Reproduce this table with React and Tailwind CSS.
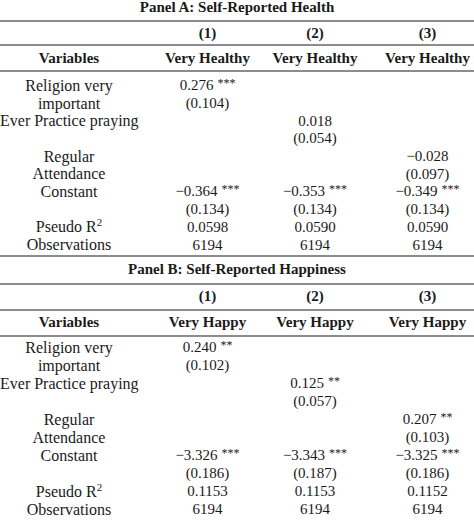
import React from "react";

const MINUS = "\u2212";

function Stars({ n }) {
  return (
    <span className="relative -top-[3px] ml-[4px] text-[12px]">{n}</span>
  );
}

function Val({ v, s }) {
  if (!v) return <div />;
  return (
    <div className="text-center whitespace-nowrap text-[15px]">
      {v}
      {s ? <Stars n={s} /> : null}
    </div>
  );
}

function Rule() {
  return <div className="h-[2px] w-full bg-[#8c8c8c]" />;
}

const GRID = "grid grid-cols-[154px_107px_108px_117px] items-center";

function Panel({ title, dep, rows, rowH, titleCls, headCls, varCls, padTop, bottomRule }) {
  return (
    <div className="flex flex-col">
      <div className={`${titleCls} flex items-center justify-center w-[474px] font-bold text-[15px]`}>
        {title}
      </div>
      <Rule />
      <div className={`${GRID} ${headCls} font-bold text-[15px]`}>
        <div />
        <div className="text-center">(1)</div>
        <div className="text-center">(2)</div>
        <div className="text-center">(3)</div>
      </div>
      <Rule />
      <div className={`${GRID} ${varCls} font-bold text-[15px]`}>
        <div className="text-center pr-[16px]">Variables</div>
        <div className="text-center whitespace-nowrap">{dep}</div>
        <div className="text-center whitespace-nowrap">{dep}</div>
        <div className="text-center whitespace-nowrap">{dep}</div>
      </div>
      <Rule />
      <div className={`flex flex-col ${padTop}`}>
        {rows.map((r, i) => (
          <div key={i} className={`${GRID} ${rowH}`}>
            <div className="text-center pr-[16px] whitespace-nowrap text-[16px]">
              {r[0]}
            </div>
            <Val v={r[1]} s={r[2]} />
            <Val v={r[3]} s={r[4]} />
            <Val v={r[5]} s={r[6]} />
          </div>
        ))}
      </div>
      {bottomRule ? <Rule /> : null}
    </div>
  );
}

const pseudo = (
  <span>
    Pseudo R<span className="relative -top-[6px] text-[11px]">2</span>
  </span>
);

const rowsA = [
  ["Religion very", "0.276", "***"],
  ["important", "(0.104)"],
  ["Ever Practice praying", null, null, "0.018"],
  ["", null, null, "(0.054)"],
  ["Regular", null, null, null, null, `${MINUS}0.028`],
  ["Attendance", null, null, null, null, "(0.097)"],
  ["Constant", `${MINUS}0.364`, "***", `${MINUS}0.353`, "***", `${MINUS}0.349`, "***"],
  ["", "(0.134)", null, "(0.134)", null, "(0.134)"],
  [pseudo, "0.0598", null, "0.0590", null, "0.0590"],
  ["Observations", "6194", null, "6194", null, "6194"],
];

const rowsB = [
  ["Religion very", "0.240", "**"],
  ["important", "(0.102)"],
  ["Ever Practice praying", null, null, "0.125", "**"],
  ["", null, null, "(0.057)"],
  ["Regular", null, null, null, null, "0.207", "**"],
  ["Attendance", null, null, null, null, "(0.103)"],
  ["Constant", `${MINUS}3.326`, "***", `${MINUS}3.343`, "***", `${MINUS}3.325`, "***"],
  ["", "(0.186)", null, "(0.187)", null, "(0.186)"],
  [pseudo, "0.1153", null, "0.1153", null, "0.1152"],
  ["Observations", "6194", null, "6194", null, "6194"],
];

export default function App() {
  return (
    <div className="w-[474px] h-[521px] overflow-hidden bg-white text-[#1a1a1a] font-['Liberation_Serif',serif] leading-none">
      <div className="w-[486px] flex flex-col">
        <Panel
          title="Panel A: Self-Reported Health"
          dep="Very Healthy"
          rows={rowsA}
          rowH="h-[17.7px]"
          titleCls="h-[20px] pb-[6px]"
          headCls="h-[22px]"
          varCls="h-[24px]"
          padTop="pt-[5px] pb-[1px]"
          bottomRule
        />
        <Panel
          title="Panel B: Self-Reported Happiness"
          dep="Very Happy"
          rows={rowsB}
          rowH="h-[18px]"
          titleCls="h-[26px]"
          headCls="h-[24px]"
          varCls="h-[24px]"
          padTop="pt-[2px]"
        />
      </div>
    </div>
  );
}
